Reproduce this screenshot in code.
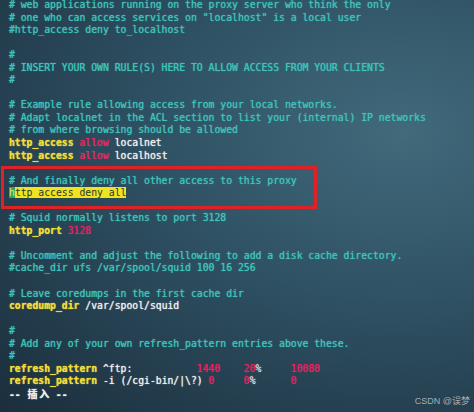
import React from 'react';

const C = 'text-[#3fc3b9]';
const K = 'text-[#efdc3a] font-bold';
const A = 'text-[#ea2a60]';
const W = 'text-[#eef0f0]';
const N = 'text-[#ea2160]';
const P = 'text-[#d8dcdc]';

const lines = [
  [[C, '# web applications running on the proxy server who think the only']],
  [[C, '# one who can access services on "localhost" is a local user']],
  [[C, '#http_access deny to_localhost']],
  [],
  [[C, '#']],
  [[C, '# INSERT YOUR OWN RULE(S) HERE TO ALLOW ACCESS FROM YOUR CLIENTS']],
  [[C, '#']],
  [],
  [[C, '# Example rule allowing access from your local networks.']],
  [[C, '# Adapt localnet in the ACL section to list your (internal) IP networks']],
  [[C, '# from where browsing should be allowed']],
  [[K, 'http_access '], [A, 'allow'], [W, ' localnet']],
  [[K, 'http_access '], [A, 'allow'], [W, ' localhost']],
  [],
  [[C, '# And finally deny all other access to this proxy']],
  'cursor',
  [],
  [[C, '# Squid normally listens to port 3128']],
  [[K, 'http_port '], [N, '3128']],
  [],
  [[C, '# Uncomment and adjust the following to add a disk cache directory.']],
  [[C, '#cache_dir ufs /var/spool/squid 100 16 256']],
  [],
  [[C, '# Leave coredumps in the first cache dir']],
  [[K, 'coredump_dir'], [W, ' /var/spool/squid']],
  [],
  [[C, '#']],
  [[C, '# Add any of your own refresh_pattern entries above these.']],
  [[C, '#']],
  [[K, 'refresh_pattern'], [W, ' ^ftp:           '], [N, '1440'], [W, '    '], [N, '20'], [P, '%'], [W, '     '], [N, '10080']],
  [[K, 'refresh_pattern'], [W, ' -i (/cgi-bin/|\\?) '], [N, '0'], [W, '     '], [N, '0'], [P, '%'], [W, '      '], [N, '0']],
];

function App() {
  return (
    <div className="relative w-[474px] h-[412px] overflow-hidden bg-[radial-gradient(ellipse_at_85%_32%,#416a7b_0%,#2f5264_42%,#1b2e3c_100%)]">
      <div className="-mt-[1px] pl-[9px] font-['DejaVu_Sans_Mono',monospace] text-[9.75px] leading-[12.55px] whitespace-pre [text-shadow:0_0_1px_currentColor]">
        {lines.map((line, i) =>
          line === 'cursor' ? (
            <div key={i} className="h-[12.55px] [text-shadow:none]">
              <span className="bg-[#2ea65a] text-[#e9e56a]">h</span>
              <span className="bg-[#f1e41e] text-[#27363c]">ttp_access deny all</span>
            </div>
          ) : (
            <div key={i} className="h-[12.55px]">
              {line.map(([cls, txt], j) => (
                <span key={j} className={cls}>{txt}</span>
              ))}
            </div>
          )
        )}
        <div className="h-[12.55px] text-[#eef0f0] font-bold">
          <span>-- </span>
          <span className="inline-block w-[11.7px] text-center font-['Noto_Sans_CJK_SC',sans-serif] text-[10px]">插</span>
          <span className="inline-block w-[11.7px] text-center font-['Noto_Sans_CJK_SC',sans-serif] text-[10px]">入</span>
          <span> --</span>
        </div>
      </div>

      <div className="absolute left-[1px] top-[166px] w-[316px] h-[43px] border-[3px] border-[#de2228]" />

      <div className="absolute right-[4px] bottom-[4px] text-[9px] text-[#c3ccd2]/80 font-['Liberation_Sans','Noto_Sans_CJK_SC',sans-serif]">
        CSDN @误梦
      </div>
    </div>
  );
}

export default App;
